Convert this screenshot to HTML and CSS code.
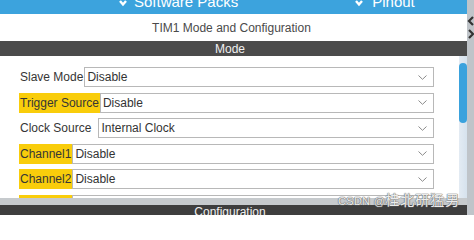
FILE: index.html
```html
<!DOCTYPE html>
<html>
<head>
<meta charset="utf-8">
<link rel="stylesheet" href="styles.css">
</head>
<body>
<div class="app">
  <div class="main">
    <div class="topbar">
      <div class="tab tab-sw">
        <svg class="tab-icon" viewBox="0 0 8 7"><polyline points="1,1 4,4.5 7,1" fill="none" stroke="#fff" stroke-width="2.4" stroke-linejoin="miter"/></svg>
        <span>Software Packs</span>
      </div>
      <div class="tab tab-pin">
        <svg class="tab-icon pin-icon" viewBox="0 0 8 7"><polyline points="1,1 4,4.5 7,1" fill="none" stroke="#fff" stroke-width="2.4" stroke-linejoin="miter"/></svg>
        <span>Pinout</span>
      </div>
    </div>
    <div class="title">TIM1 Mode and Configuration</div>
    <div class="section-bar">Mode</div>
    <div class="content">
      <div class="form">
        <div class="row">
          <span class="label">Slave Mode</span>
          <div class="select"><span>Disable</span><svg class="caret" viewBox="0 0 9 5"><polyline points="0.5,0.5 4.5,4.3 8.5,0.5" fill="none" stroke="#8a8a8a" stroke-width="1"/></svg></div>
        </div>
        <div class="row">
          <span class="label hl">Trigger Source</span>
          <div class="select"><span>Disable</span><svg class="caret" viewBox="0 0 9 5"><polyline points="0.5,0.5 4.5,4.3 8.5,0.5" fill="none" stroke="#8a8a8a" stroke-width="1"/></svg></div>
        </div>
        <div class="row">
          <span class="label wide">Clock Source</span>
          <div class="select"><span>Internal Clock</span><svg class="caret" viewBox="0 0 9 5"><polyline points="0.5,0.5 4.5,4.3 8.5,0.5" fill="none" stroke="#8a8a8a" stroke-width="1"/></svg></div>
        </div>
        <div class="row">
          <span class="label hl">Channel1</span>
          <div class="select"><span>Disable</span><svg class="caret" viewBox="0 0 9 5"><polyline points="0.5,0.5 4.5,4.3 8.5,0.5" fill="none" stroke="#8a8a8a" stroke-width="1"/></svg></div>
        </div>
        <div class="row">
          <span class="label hl">Channel2</span>
          <div class="select"><span>Disable</span><svg class="caret" viewBox="0 0 9 5"><polyline points="0.5,0.5 4.5,4.3 8.5,0.5" fill="none" stroke="#8a8a8a" stroke-width="1"/></svg></div>
        </div>
        <div class="row">
          <span class="label hl">Channel3</span>
          <div class="select"><span>Disable</span><svg class="caret" viewBox="0 0 9 5"><polyline points="0.5,0.5 4.5,4.3 8.5,0.5" fill="none" stroke="#8a8a8a" stroke-width="1"/></svg></div>
        </div>
      </div>
      <div class="scroll"><div class="thumb"></div></div>
    </div>
    <div class="shade"></div>
    <div class="section-bar config">Configuration</div>
  </div>
  <div class="edge">
    <svg class="edge-icon" viewBox="0 0 7 24"><polyline points="6,1 2,5 6,9" fill="none" stroke="#333" stroke-width="2.2"/><polyline points="2,14 6,18 2,22" fill="none" stroke="#333" stroke-width="2.2"/></svg>
  </div>
  <div class="watermark"><span class="wm-latin">CSDN @</span><span class="wm-cjk">桂北研猛男</span></div>
</div>
</body>
</html>
```
FILE: styles.css
```css
body {
  margin: 0;
  width: 474px;
  height: 215px;
  overflow: hidden;
  background: #fff;
  font-family: "Liberation Sans", Arial, sans-serif;
}

.app {
  position: relative;
  display: flex;
  width: 474px;
  height: 215px;
}

.main {
  width: 467px;
  display: flex;
  flex-direction: column;
}

.topbar {
  height: 14px;
  flex-shrink: 0;
  background: #3ca3dd;
  display: flex;
  overflow: hidden;
  color: #fff;
  font-size: 15px;
  line-height: 15px;
}

.tab {
  display: flex;
  align-items: flex-start;
  margin-top: -6px;
}

.tab-sw {
  margin-left: 119px;
}

.tab-pin {
  margin-left: 117px;
}

.tab-icon {
  width: 8px;
  height: 7px;
  margin-top: 6px;
  margin-right: 7px;
}

.pin-icon {
  margin-right: 9px;
}

.title {
  height: 26px;
  flex-shrink: 0;
  padding-top: 1px;
  line-height: 27px;
  text-align: center;
  font-size: 12px;
  color: #4a4a4a;
  padding-right: 4px;
}

.section-bar {
  height: 15px;
  flex-shrink: 0;
  line-height: 16px;
  background: #4b4b4b;
  color: #f0f0f0;
  text-align: center;
  font-size: 12px;
  padding-right: 7px;
  overflow: hidden;
}

.section-bar.config {
  height: 10px;
  line-height: 15px;
  background: #3e3e3e;
}

.content {
  height: 142px;
  flex-shrink: 0;
  display: flex;
  overflow: hidden;
}

.form {
  flex: 1;
  padding: 11px 25px 0 19px;
  display: flex;
  flex-direction: column;
  gap: 5.6px;
}

.row {
  display: flex;
  height: 20px;
  flex-shrink: 0;
}

.label {
  padding: 0 1px;
  line-height: 20px;
  font-size: 12px;
  color: #363636;
  white-space: nowrap;
}

.label.hl {
  background: #f9cd0b;
}

.label.wide {
  margin-right: 6px;
}

.select {
  flex: 1;
  box-sizing: border-box;
  display: flex;
  align-items: center;
  justify-content: space-between;
  border: 1px solid #b8b8b8;
  background: #fff;
  padding: 0 6px 0 2px;
  font-size: 12px;
  color: #333;
}

.caret {
  width: 9px;
  height: 5px;
}

.scroll {
  width: 8px;
  padding-top: 7px;
  background: linear-gradient(to right, #e3ebf3, #d6e2ed);
}

.thumb {
  height: 60px;
  background: #3aa2dd;
  border-radius: 4px;
}

.shade {
  height: 7px;
  flex-shrink: 0;
  background: #c6cacd;
}

.edge {
  width: 7px;
  background: #bfc4c9;
}

.edge-icon {
  display: block;
  width: 7px;
  height: 24px;
  margin-top: 16px;
}

.watermark {
  position: absolute;
  left: 338px;
  top: 192px;
  color: rgba(255, 255, 255, 0.9);
  text-shadow: 0 0 1px #666, 0 0 1px #666, 0 0 1px #888;
  white-space: nowrap;
  font-family: "Liberation Sans", "Noto Sans CJK SC", sans-serif;
  line-height: 15px;
}

.wm-latin {
  font-size: 11px;
  letter-spacing: 0.3px;
}

.wm-cjk {
  font-size: 14px;
  letter-spacing: 1px;
  font-family: "Noto Sans CJK SC", sans-serif;
}
```
